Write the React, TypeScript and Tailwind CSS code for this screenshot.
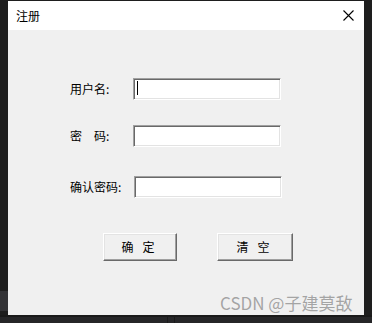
import React from 'react';

const font = "font-['Noto_Sans_CJK_SC','Noto_Sans',sans-serif]";

function Field({ label, labelWidth, caret }: { label: string; labelWidth: string; caret?: boolean }) {
  return (
    <div className="flex items-center h-[22px]">
      <span className={`${labelWidth} text-[12px] leading-none text-black whitespace-pre`}>{label}</span>
      <div className="relative w-[148px] h-[22px] bg-white border border-t-[#a0a0a0] border-l-[#a0a0a0] border-b-white border-r-white shadow-[inset_1px_1px_0_#696969,inset_-1px_-1px_0_#e3e3e3]">
        {caret && <span className="absolute left-[3px] top-[2px] w-px h-[14px] bg-black" />}
      </div>
    </div>
  );
}

function WinButton({ chars, width }: { chars: [string, string]; width: string }) {
  return (
    <button
      className={`${width} h-[28px] bg-[#f0f0f0] border border-t-white border-l-white border-b-[#696969] border-r-[#696969] shadow-[inset_-1px_-1px_0_#a0a0a0,inset_1px_1px_0_#e3e3e3] text-[12px] leading-none text-black flex items-center justify-center gap-[9px] pr-[4px]`}
    >
      <span>{chars[0]}</span>
      <span>{chars[1]}</span>
    </button>
  );
}

export default function App() {
  return (
    <div className={`relative w-[372px] h-[323px] bg-[#1e1e1e] overflow-hidden flex flex-col ${font}`}>
      <div className="flex pt-px h-[315px]">
        <div className="w-[8px] flex flex-col">
          <div className="h-[290px]" />
          <div className="h-[20px] bg-[#333336]" />
        </div>
        <div className="w-[356px] flex flex-col">
          <div className="h-[29px] bg-white flex items-center justify-between pl-[8px] pr-[10px]">
            <span className="text-[12px] leading-none text-black">注册</span>
            <svg width="11" height="11" viewBox="0 0 11 11" className="text-black">
              <path d="M0.5 0.5 L10.5 10.5 M10.5 0.5 L0.5 10.5" stroke="currentColor" strokeWidth="1.1" />
            </svg>
          </div>
          <div className="flex-1 bg-[#f0f0f0] pt-[48px] pl-[62px]">
            <Field label="用户名:" labelWidth="w-[63px]" caret />
            <div className="mt-[25px]">
              <Field label={'密\u3000码:'} labelWidth="w-[63px]" />
            </div>
            <div className="mt-[29px]">
              <Field label="确认密码:" labelWidth="w-[64px]" />
            </div>
            <div className="mt-[35px] ml-[33px] flex gap-[40px]">
              <WinButton width="w-[74px]" chars={['确', '定']} />
              <WinButton width="w-[76px]" chars={['清', '空']} />
            </div>
          </div>
        </div>
        <div className="w-[8px]" />
      </div>
      <div className="h-[2px] bg-[#1a1a1a]" />
      <div className="flex-1 flex bg-[#262628]">
        <div className="w-[168px] border-r border-[#1a1a1a]" />
        <div className="w-[6px]" />
        <div className="flex-1 border-l border-[#1a1a1a]" />
      </div>
      <span className="absolute left-[220px] top-[294px] text-[17px] leading-none text-[#a4a4a4] whitespace-nowrap [text-shadow:0_0_1px_rgba(255,255,255,0.6)]">
        CSDN @子建莫敌
      </span>
    </div>
  );
}
